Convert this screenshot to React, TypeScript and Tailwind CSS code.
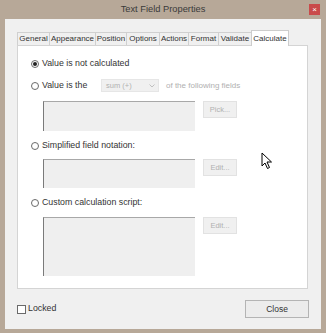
import React from 'react';

const tabs: [string, string][] = [
    ['General', 'w-[33px]'],
    ['Appearance', 'w-[47px]'],
    ['Position', 'w-[32px]'],
    ['Options', 'w-[34px]'],
    ['Actions', 'w-[30px]'],
    ['Format', 'w-[31px]'],
    ['Validate', 'w-[34px]'],
];

const Radio = ({ checked, label }: { checked?: boolean; label: string }) => (
    <div className="h-[12px] flex items-center gap-[3px] text-[8.8px] text-[#333]">
        <span className="w-[8px] h-[8px] rounded-full border border-[#6a6a6a] bg-white flex items-center justify-center">
            {checked && <span className="w-[4px] h-[4px] rounded-full bg-[#222]" />}
        </span>
        <span>{label}</span>
    </div>
);

const FieldBox = ({ h }: { h: string }) => (
    <div className={`w-[152px] ${h} bg-[#efefef] border-t border-l border-t-[#a8a8a8] border-l-[#7a7a7a]`} />
);

const SmallButton = ({ label }: { label: string }) => (
    <div className="w-[34px] h-[17px] bg-[#f0f0f0] border border-[#e2e2e2] text-[7.5px] text-[#b0b0b0] flex items-center justify-center">
        {label}
    </div>
);

const App: React.FC = () => {
    return (
        <div className="w-[326px] h-[333px] bg-[#b7a898] flex flex-col font-['Liberation_Sans',Arial,sans-serif] overflow-hidden">
            {/* title bar */}
            <div className="h-[19px] relative flex items-center justify-center">
                <span className="text-[9.3px] text-[#3a3a3a]">Text Field Properties</span>
                <div className="absolute right-[6px] top-[4px] w-[11px] h-[11px] bg-[#c94a4a] text-white text-[8px] leading-[11px] text-center">
                    ×
                </div>
            </div>

            {/* client area */}
            <div className="flex-1 mx-[5px] mb-[4px] bg-[#f0f0f0] flex flex-col px-[12px] pt-[11px]">
                {/* tabs */}
                <div className="flex items-end h-[15px] text-[8px] text-[#333] relative z-10">
                    {tabs.map(([t, w]) => (
                        <div key={t} className={`${w} h-[13px] border border-b-0 border-[#d0d0d0] -ml-px first:ml-0 bg-[#f0f0f0] flex items-center justify-center`}>
                            {t}
                        </div>
                    ))}
                    <div className="w-[38px] h-[16px] border border-b-0 border-[#cdcdcd] -ml-px bg-white flex items-center justify-center -mb-px">
                        Calculate
                    </div>
                </div>

                {/* panel */}
                <div className="w-[291px] h-[244px] bg-white border border-[#d4d4d4] pl-[13px] pt-[12px] flex flex-col">
                    <Radio checked label="Value is not calculated" />

                    <div className="flex items-center h-[13px] mt-[9px]">
                        <div className="w-[70px]"><Radio label="Value is the" /></div>
                        <div className="w-[58px] h-[13px] bg-[#f0f0f0] border border-[#e6e6e6] text-[7.5px] text-[#b0b0b0] flex items-center justify-between pl-[4px] pr-[3px]">
                            <span>sum (+)</span>
                            <svg width="6" height="4" viewBox="0 0 6 4"><path d="M0.5 0.5 L3 3 L5.5 0.5" fill="none" stroke="#c0c0c0" strokeWidth="1" /></svg>
                        </div>
                        <span className="ml-[7px] text-[8px] text-[#b0b0b0]">of the following fields</span>
                    </div>

                    <div className="flex items-start gap-[8px] ml-[12px] mt-[9px]">
                        <FieldBox h="h-[30px]" />
                        <SmallButton label="Pick..." />
                    </div>

                    <div className="mt-[9px]"><Radio label="Simplified field notation:" /></div>
                    <div className="flex items-start gap-[8px] ml-[12px] mt-[7px]">
                        <FieldBox h="h-[29px]" />
                        <SmallButton label="Edit..." />
                    </div>

                    <div className="mt-[9px]"><Radio label="Custom calculation script:" /></div>
                    <div className="flex items-start gap-[8px] ml-[12px] mt-[8px]">
                        <FieldBox h="h-[59px]" />
                        <SmallButton label="Edit..." />
                    </div>
                </div>

                {/* footer */}
                <div className="flex items-center justify-between mt-[11px]">
                    <div className="flex items-center gap-[2px] text-[8.8px] text-[#333]">
                        <span className="w-[9px] h-[9px] border border-[#6a6a6a] bg-white" />
                        <span>Locked</span>
                    </div>
                    <div className="w-[64px] h-[18px] bg-[#ececec] border border-[#b4b4b4] text-[8.5px] text-[#333] flex items-center justify-center">
                        Close
                    </div>
                </div>
            </div>

            {/* mouse pointer in the screenshot */}
            <svg className="absolute left-[261px] top-[152px]" width="12" height="18" viewBox="0 0 12 18">
                <path d="M1 1 L1 14 L4 11 L6.5 16.5 L8.5 15.5 L6 10 L10.5 10 Z" fill="white" stroke="black" strokeWidth="1" strokeLinejoin="round" />
            </svg>
        </div>
    );
};

export default App;
